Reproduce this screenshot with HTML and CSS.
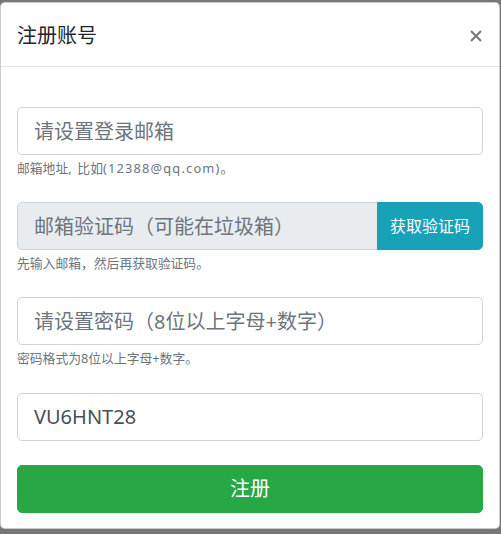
FILE: index.html
```html
<!DOCTYPE html>
<html lang="zh-CN">
<head>
<meta charset="utf-8">
<title>注册账号</title>
<link rel="stylesheet" href="styles.css">
</head>
<body>
<div class="backdrop">
  <div class="modal">
    <div class="modal-header">
      <h5 class="modal-title">注册账号</h5>
      <button class="close" type="button" aria-label="Close">
        <svg width="12" height="12" viewBox="0 0 12 12"><path d="M1 1 L11 11 M11 1 L1 11" stroke="currentColor" stroke-width="2.2" stroke-linecap="butt"/></svg>
      </button>
    </div>
    <form class="modal-body">
      <div class="form-group">
        <input class="form-control" type="text" placeholder="请设置登录邮箱">
        <small class="form-text">邮箱地址<span class="latin">, </span>比如<span class="latin">(12388@qq.com)</span>。</small>
      </div>
      <div class="form-group">
        <div class="input-group">
          <input class="form-control readonly" type="text" placeholder="邮箱验证码（可能在垃圾箱）" readonly>
          <button class="btn-info" type="button">获取验证码</button>
        </div>
        <small class="form-text">先输入邮箱，然后再获取验证码。</small>
      </div>
      <div class="form-group">
        <input class="form-control" type="password" placeholder="请设置密码（8位以上字母+数字）">
        <small class="form-text">密码格式为8位以上字母+数字。</small>
      </div>
      <div class="form-group">
        <input class="form-control" type="text" value="VU6HNT28">
      </div>
      <button class="btn-success" type="button">注册</button>
    </form>
  </div>
</div>
</body>
</html>
```
FILE: styles.css
```css
* { box-sizing: border-box; }
html, body {
  margin: 0;
  padding: 0;
  background: #777777;
  font-family: "Noto Sans", "Noto Sans CJK SC", sans-serif;
  color: #212529;
}
.backdrop {
  width: 501px;
  height: 534px;
  padding: 2px 1px 0 0;
}
.modal {
  width: 500px;
  background: #fff;
  border: 1px solid rgba(0,0,0,0.2);
  border-radius: 5px;
}
.modal-header {
  display: flex;
  align-items: center;
  justify-content: space-between;
  height: 64px;
  padding: 2px 16px 0;
  border-bottom: 1px solid #dee2e6;
}
.modal-title {
  margin: 0;
  font-size: 20px;
  font-weight: 400;
  line-height: 30px;
  color: #212529;
}
.close {
  border: 0;
  background: transparent;
  padding: 0;
  margin-right: 1px;
  color: #7a7a7a;
  display: flex;
  cursor: pointer;
}
.modal-body {
  display: flex;
  flex-direction: column;
  padding: 40px 16px 15px;
}
.form-group {
  margin-bottom: 24px;
  display: flex;
  flex-direction: column;
}
.form-control {
  display: block;
  width: 100%;
  height: 48px;
  padding: 8px 16px;
  font-family: inherit;
  font-size: 20px;
  line-height: 1.5;
  color: #495057;
  background: #fff;
  border: 1px solid #ced4da;
  border-radius: 5px;
  outline: none;
}
.form-control::placeholder {
  color: #6c757d;
  opacity: 1;
}
.form-control.readonly {
  background: #e9ecef;
  border-radius: 5px 0 0 5px;
  flex: 1;
  min-width: 0;
}
.input-group {
  display: flex;
  height: 48px;
}
.btn-info {
  flex: none;
  width: 106px;
  padding: 0 12px;
  border: 1px solid #17a2b8;
  background: #17a2b8;
  color: #fff;
  font-family: inherit;
  font-size: 16px;
  line-height: 1.5;
  border-radius: 0 5px 5px 0;
  margin-left: -1px;
}
.form-text {
  margin-top: 4px;
  font-size: 12.8px;
  line-height: 1.5;
  color: #6c757d;
}
.latin {
  letter-spacing: 1.2px;
}
.btn-success {
  height: 48px;
  width: 100%;
  border: 1px solid #28a745;
  background: #28a745;
  color: #fff;
  font-family: inherit;
  font-size: 20px;
  line-height: 1.5;
  border-radius: 5px;
}
```
